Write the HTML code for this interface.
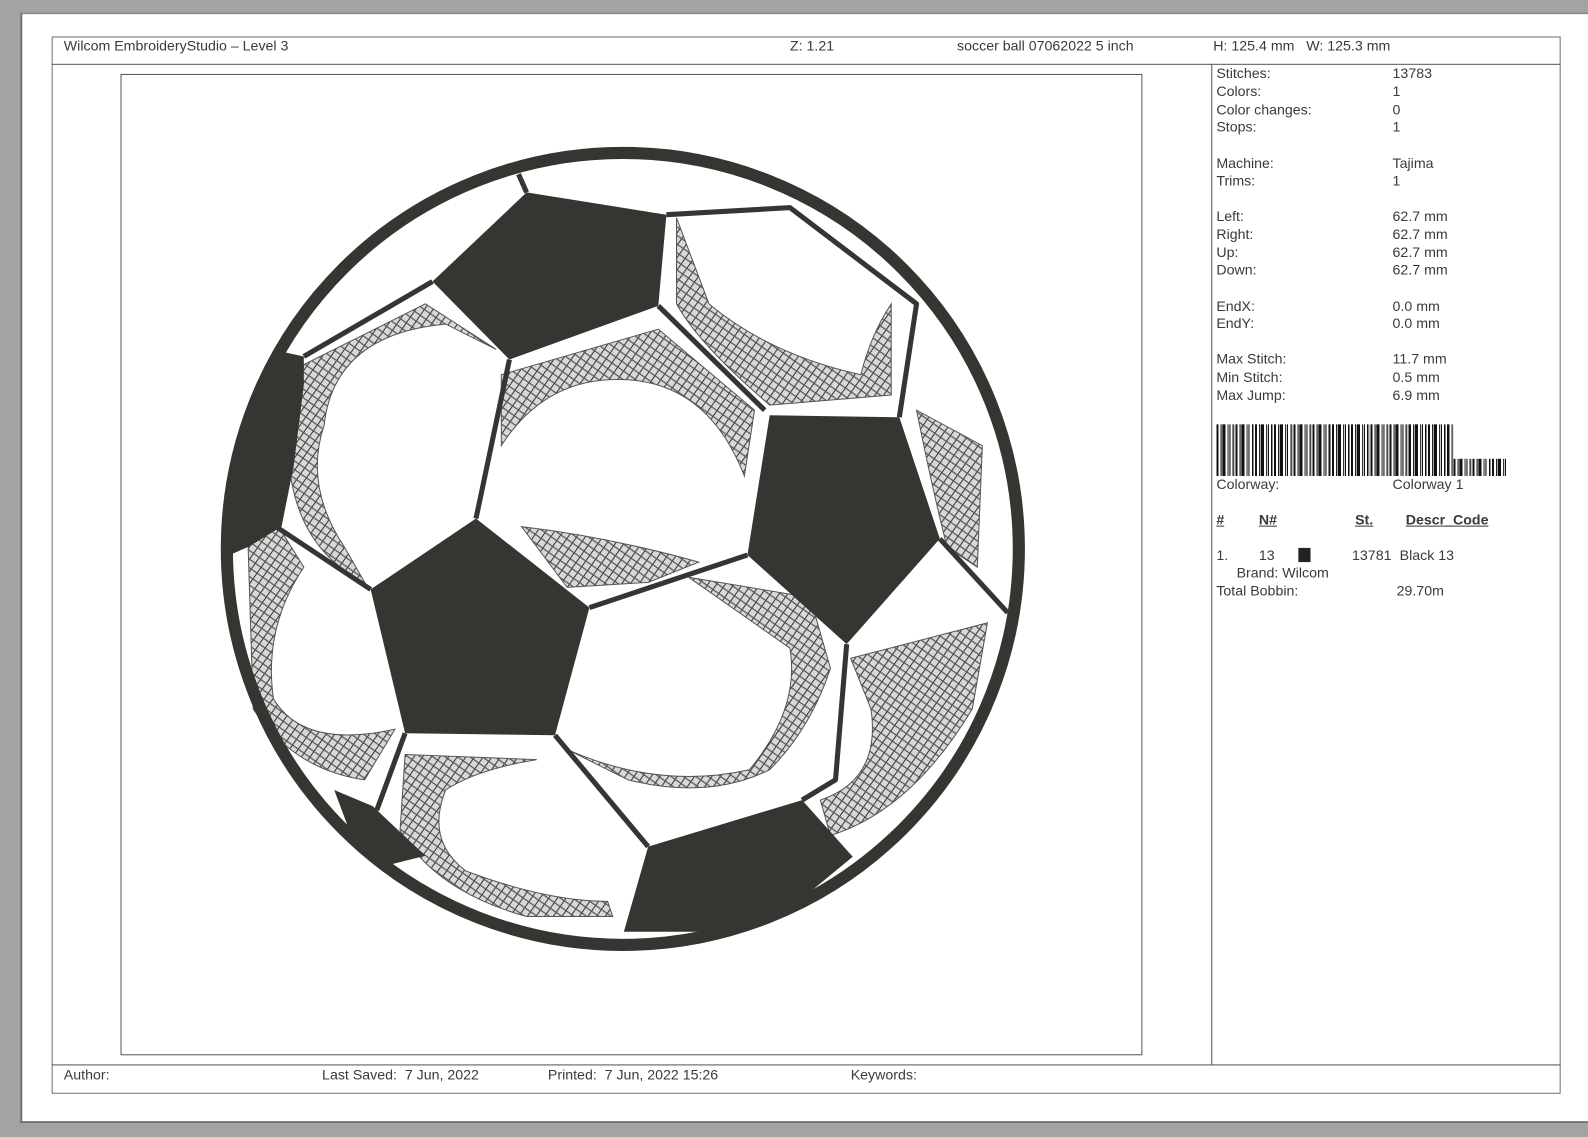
<!DOCTYPE html>
<html><head><meta charset="utf-8"><style>
html,body{margin:0;padding:0}
body{width:1588px;height:1137px;background:#a3a3a3;position:relative;overflow:hidden;font-family:"Liberation Sans",Arial,sans-serif;font-size:14px;color:#3a3a3a}
#w{position:absolute;left:0;top:0;width:1568px;height:1123px;transform:scale(1.01276);transform-origin:0 0}
.page{position:absolute;left:20px;top:12px;width:1568px;height:1097px;background:#fff;border-left:2px solid #6a6a6a;border-top:2px solid #8a8a8a;border-bottom:2px solid #707070;box-sizing:border-box}
.t{position:absolute;white-space:nowrap;line-height:16px}
.frame{position:absolute;left:51px;top:36px;width:1490px;height:1044px;border:1px solid #707070;box-sizing:border-box}
.hl{position:absolute;height:1px;background:#555}
.vl{position:absolute;width:1px;background:#555}
.u{text-decoration:underline}
.bc{position:absolute;background:repeating-linear-gradient(90deg,#111 0 2px,#fff 2px 4px,#222 4px 5px,#aaa 5px 6px,#111 6px 9px,#fff 9px 11px,#333 11px 12px,#ccc 12px 13px,#111 13px 14px,#fff 14px 16px,#111 16px 17px,#888 17px 18px,#fff 18px 19px)}
</style></head><body>
<div id="w">
<div class="page"></div>
<div class="frame"></div>
<div class="hl" style="left:51px;top:63px;width:1490px"></div>
<div class="hl" style="left:51px;top:1051px;width:1490px"></div>
<div class="vl" style="left:1196px;top:63px;height:988px"></div>
<div style="position:absolute;left:119px;top:73px;width:1009px;height:969px;border:1px solid #555;box-sizing:border-box"></div>

<div class="t" style="left:63px;top:37px">Wilcom EmbroideryStudio – Level 3</div>
<div class="t" style="left:780px;top:37px">Z: 1.21</div>
<div class="t" style="left:945px;top:37px">soccer ball 07062022 5 inch</div>
<div class="t" style="left:1198px;top:37px">H: 125.4 mm&nbsp;&nbsp;&nbsp;W: 125.3 mm</div>

<div class="t" style="left:63px;top:1053px">Author:</div>
<div class="t" style="left:318px;top:1053px">Last Saved:&nbsp;&nbsp;7 Jun, 2022</div>
<div class="t" style="left:541px;top:1053px">Printed:&nbsp;&nbsp;7 Jun, 2022 15:26</div>
<div class="t" style="left:840px;top:1053px">Keywords:</div>

<div class="t" style="left:1201px;top:64px">Stitches:</div><div class="t" style="left:1375px;top:64px">13783</div>
<div class="t" style="left:1201px;top:82px">Colors:</div><div class="t" style="left:1375px;top:82px">1</div>
<div class="t" style="left:1201px;top:100px">Color changes:</div><div class="t" style="left:1375px;top:100px">0</div>
<div class="t" style="left:1201px;top:117px">Stops:</div><div class="t" style="left:1375px;top:117px">1</div>
<div class="t" style="left:1201px;top:153px">Machine:</div><div class="t" style="left:1375px;top:153px">Tajima</div>
<div class="t" style="left:1201px;top:170px">Trims:</div><div class="t" style="left:1375px;top:170px">1</div>
<div class="t" style="left:1201px;top:205px">Left:</div><div class="t" style="left:1375px;top:205px">62.7 mm</div>
<div class="t" style="left:1201px;top:223px">Right:</div><div class="t" style="left:1375px;top:223px">62.7 mm</div>
<div class="t" style="left:1201px;top:241px">Up:</div><div class="t" style="left:1375px;top:241px">62.7 mm</div>
<div class="t" style="left:1201px;top:258px">Down:</div><div class="t" style="left:1375px;top:258px">62.7 mm</div>
<div class="t" style="left:1201px;top:294px">EndX:</div><div class="t" style="left:1375px;top:294px">0.0 mm</div>
<div class="t" style="left:1201px;top:311px">EndY:</div><div class="t" style="left:1375px;top:311px">0.0 mm</div>
<div class="t" style="left:1201px;top:346px">Max Stitch:</div><div class="t" style="left:1375px;top:346px">11.7 mm</div>
<div class="t" style="left:1201px;top:364px">Min Stitch:</div><div class="t" style="left:1375px;top:364px">0.5 mm</div>
<div class="t" style="left:1201px;top:382px">Max Jump:</div><div class="t" style="left:1375px;top:382px">6.9 mm</div>

<div class="bc" style="left:1201px;top:419px;width:234px;height:51px"></div>
<div class="bc" style="left:1435px;top:453px;width:53px;height:17px"></div>

<div class="t" style="left:1201px;top:470px">Colorway:</div><div class="t" style="left:1375px;top:470px">Colorway 1</div>
<div class="t u" style="left:1201px;top:505px;font-weight:bold">#</div>
<div class="t u" style="left:1243px;top:505px;font-weight:bold">N#</div>
<div class="t u" style="left:1338px;top:505px;font-weight:bold">St.</div>
<div class="t u" style="left:1388px;top:505px;font-weight:bold">Descr_Code</div>
<div class="t" style="left:1201px;top:540px">1.</div>
<div class="t" style="left:1243px;top:540px">13</div>
<div style="position:absolute;left:1282px;top:541px;width:12px;height:14px;background:#222"></div>
<div class="t" style="left:1335px;top:540px">13781</div>
<div class="t" style="left:1382px;top:540px">Black 13</div>
<div class="t" style="left:1221px;top:557px">Brand: Wilcom</div>
<div class="t" style="left:1201px;top:575px">Total Bobbin:</div>
<div class="t" style="left:1379px;top:575px">29.70m</div>

<svg style="position:absolute;left:0;top:0" width="1568" height="1123" viewBox="0 0 1568 1123">
<defs>
<pattern id="h" width="7" height="7" patternUnits="userSpaceOnUse" patternTransform="rotate(35)">
<rect width="7" height="7" fill="#d8d8d8"/><line x1="0" y1="0" x2="0" y2="7" stroke="#333" stroke-width="2"/><line x1="0" y1="3" x2="7" y2="3" stroke="#555" stroke-width="1.2"/>
</pattern>
<clipPath id="c"><circle cx="615" cy="542" r="388"/></clipPath>
</defs>
<g fill="url(#h)" stroke="#555" stroke-width="1">
<path d="M300,360 L420,300 L490,345 L440,320 Q330,330 320,420 Q300,480 340,540 L360,575 Q290,540 285,450 Z"/>
<path d="M495,370 L650,325 L745,405 L735,470 Q700,380 620,375 Q540,370 495,440 Z"/>
<path d="M668,215 L700,300 Q760,350 850,370 Q860,330 880,300 L880,390 L760,400 Q690,340 668,300 Z"/>
<path d="M905,405 L970,440 L965,560 L935,540 Q920,480 905,405 Z"/>
<path d="M515,520 Q600,530 690,555 L640,575 L560,580 Z"/>
<path d="M680,570 L800,590 L820,660 Q800,720 760,760 Q700,790 620,770 Q580,750 560,740 Q650,780 740,760 Q790,700 780,640 Z"/>
<path d="M840,650 L975,615 L960,700 Q900,800 820,825 L810,790 Q870,770 860,700 Z"/>
<path d="M245,540 L275,520 L300,560 Q260,620 270,690 Q300,740 390,720 L360,770 Q290,760 250,700 Z"/>
<path d="M400,745 L530,750 Q470,760 440,780 Q420,830 460,860 Q540,890 600,890 L605,905 L520,905 Q430,880 395,820 Z"/>
</g>
<g clip-path="url(#c)" fill="#353531">
<polygon points="520,190 658,212 650,302 503,355 427,278"/>
<polygon points="760,410 888,412 928,532 836,636 738,548"/>
<polygon points="470,512 582,600 548,726 400,724 366,582"/>
<polygon points="640,836 792,790 842,846 752,920 616,920"/>
<path d="M200,330 L300,352 L300,380 L290,460 L278,520 L245,540 L200,560 Z"/>
<path d="M330,780 L368,796 L420,845 L360,860 Z"/>
</g>
<g fill="none" stroke="#353531" stroke-width="5" stroke-linejoin="round" clip-path="url(#c)">
<polyline points="520,190 512,172"/>
<polyline points="658,212 780,205 905,300 888,412"/>
<polyline points="650,302 755,405"/>
<polyline points="503,355 470,512"/>
<polyline points="427,278 300,352"/>
<polyline points="738,548 582,600"/>
<polyline points="928,532 995,605"/>
<polyline points="836,636 825,770 792,790"/>
<polyline points="548,726 640,836"/>
<polyline points="400,724 372,800"/>
<polyline points="366,582 265,515"/>
</g>
<circle cx="615" cy="542" r="391" fill="none" stroke="#353531" stroke-width="12"/>
</svg>
</div>
</body></html>
